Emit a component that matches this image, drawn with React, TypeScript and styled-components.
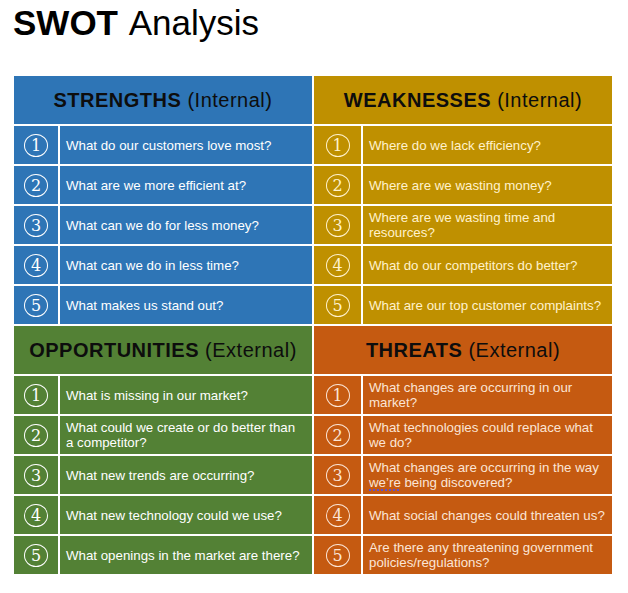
import React from "react";
import styled, { createGlobalStyle } from "styled-components";

const Global = createGlobalStyle`
  html, body { margin: 0; padding: 0; background: #ffffff; }
  body { font-family: "Liberation Sans", Arial, sans-serif; }
`;

const Page = styled.div`
  width: 628px;
  height: 593px;
  box-sizing: border-box;
  padding: 3px 0 0 14px;
  background: #ffffff;
`;

const Title = styled.h1`
  margin: 0 0 33px -1px;
  font-family: "Liberation Sans", Arial, sans-serif;
  font-size: 35px;
  line-height: 40px;
  font-weight: 400;
  word-spacing: 3px;
  color: #000;
  b { font-weight: 700; }
`;

const Board = styled.div`
  display: grid;
  grid-template-columns: 298px 298px;
  gap: 2px;
`;

const Quadrant = styled.section`
  display: flex;
  flex-direction: column;
  gap: 2px;
`;

const Header = styled.div<{ $bg: string }>`
  height: 48px;
  background: ${(p) => p.$bg};
  display: flex;
  align-items: center;
  justify-content: center;
  font-size: 20px;
  letter-spacing: 0.5px;
  color: #0d0d0d;
  white-space: nowrap;
  b { font-weight: 700; }
`;

const Row = styled.div<{ $numW: number }>`
  height: 38px;
  display: grid;
  grid-template-columns: ${(p) => p.$numW}px 1fr;
  column-gap: 2px;
`;

const NumCell = styled.div<{ $bg: string }>`
  background: ${(p) => p.$bg};
  display: flex;
  align-items: center;
  justify-content: center;
`;

const Circle = styled.span<{ $fg: string }>`
  box-sizing: border-box;
  width: 24px;
  height: 23px;
  border: 1.8px solid ${(p) => p.$fg};
  border-radius: 50%;
  color: ${(p) => p.$fg};
  display: flex;
  align-items: center;
  justify-content: center;
  font-family: "DejaVu Serif", "Liberation Serif", serif;
  font-size: 16px;
  line-height: 1;
  padding-top: 1px;
`;

const TextCell = styled.div<{ $bg: string; $fg: string }>`
  background: ${(p) => p.$bg};
  color: ${(p) => p.$fg};
  display: flex;
  align-items: center;
  padding: 0 2px 0 6px;
  font-size: 13.3px;
  line-height: 15px;
  white-space: pre-line;
`;

const Spell = styled.span`
  text-decoration: underline dotted #5a4fd0;
  text-decoration-thickness: 2px;
  text-underline-offset: 2px;
`;

type Quad = {
  title: string;
  sub: string;
  bg: string;
  fg: string;
  numW: number;
  items: React.ReactNode[];
};

const quads: Quad[] = [
  {
    title: "STRENGTHS",
    sub: "(Internal)",
    bg: "#2E75B6",
    fg: "#FFFFFF",
    numW: 44,
    items: [
      "What do our customers love most?",
      "What are we more efficient at?",
      "What can we do for less money?",
      "What can we do in less time?",
      "What makes us stand out?",
    ],
  },
  {
    title: "WEAKNESSES",
    sub: "(Internal)",
    bg: "#BF9000",
    fg: "#FFF2CC",
    numW: 47,
    items: [
      "Where do we lack efficiency?",
      "Where are we wasting money?",
      "Where are we wasting time and\nresources?",
      "What do our competitors do better?",
      "What are our top customer complaints?",
    ],
  },
  {
    title: "OPPORTUNITIES",
    sub: "(External)",
    bg: "#538135",
    fg: "#FFFFFF",
    numW: 44,
    items: [
      "What is missing in our market?",
      "What could we create or do better than\na competitor?",
      "What new trends are occurring?",
      "What new technology could we use?",
      "What openings in the market are there?",
    ],
  },
  {
    title: "THREATS",
    sub: "(External)",
    bg: "#C55A11",
    fg: "#FBE5D6",
    numW: 47,
    items: [
      "What changes are occurring in our\nmarket?",
      "What technologies could replace what\nwe do?",
      <>
        {"What changes are occurring in the way\n"}
        <Spell>we’re</Spell> being discovered?
      </>,
      "What social changes could threaten us?",
      "Are there any threatening government\npolicies/regulations?",
    ],
  },
];

export default function App() {
  return (
    <Page>
      <Global />
      <Title>
        <b>SWOT</b> Analysis
      </Title>
      <Board>
        {quads.map((q) => (
          <Quadrant key={q.title}>
            <Header $bg={q.bg}>
              <b>{q.title}</b>&nbsp;{q.sub}
            </Header>
            {q.items.map((it, i) => (
              <Row key={i} $numW={q.numW}>
                <NumCell $bg={q.bg}>
                  <Circle $fg={q.fg}>{i + 1}</Circle>
                </NumCell>
                <TextCell $bg={q.bg} $fg={q.fg}>
                  <span>{it}</span>
                </TextCell>
              </Row>
            ))}
          </Quadrant>
        ))}
      </Board>
    </Page>
  );
}
